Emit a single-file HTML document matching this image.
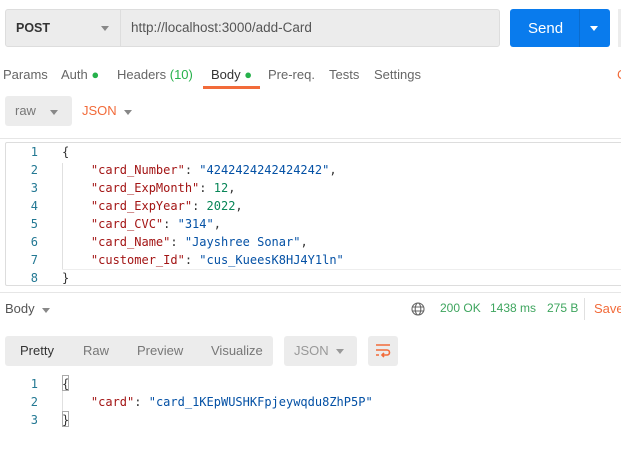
<!DOCTYPE html>
<html><head><meta charset="utf-8"><style>
*{margin:0;padding:0;box-sizing:border-box}
body{width:621px;height:459px;background:#fff;font-family:"Liberation Sans",sans-serif;font-size:13px;color:#505050;position:relative;overflow:hidden}
.a{position:absolute;white-space:nowrap}
.mono{font-family:"DejaVu Sans Mono","Liberation Mono",monospace;font-size:12px}
.tri{display:inline-block;width:0;height:0;border-left:4px solid transparent;border-right:4px solid transparent;border-top:5px solid #888}
.k{color:#a31515}.s{color:#0451a5}.n{color:#098658}.ln{color:#237893;text-align:right;width:20px}
</style></head><body>
<div class="a" style="left:5px;top:9px;width:495px;height:38px;background:#ececec;border:1px solid #ddd;border-radius:3px"></div>
<div class="a" style="left:120px;top:10px;width:1px;height:36px;background:#ddd"></div>
<div class="a" style="left:16px;top:21px;font-weight:bold;color:#333;font-size:12.5px">POST</div>
<div class="a tri" style="left:101px;top:26px"></div>
<div class="a" style="left:131px;top:20px;color:#555;font-size:13.5px">http://localhost:3000/add-Card</div>
<div class="a" style="left:510px;top:9px;width:100px;height:38px;background:#097bed;border-radius:3px"></div>
<div class="a" style="left:579px;top:9px;width:1px;height:38px;background:#0a6ccf"></div>
<div class="a" style="left:528px;top:20px;color:#fff;font-size:15px">Send</div>
<div class="a tri" style="left:590px;top:26px;border-top-color:#fff"></div>
<div class="a" style="left:618px;top:9px;width:3px;height:38px;background:#ececec"></div>

<div class="a" style="left:3px;top:67px;color:#666">Params</div>
<div class="a" style="left:61px;top:67px;color:#666">Auth <span style="color:#26b14b">●</span></div>
<div class="a" style="left:117px;top:67px;color:#666">Headers <span style="color:#26b14b">(10)</span></div>
<div class="a" style="left:211px;top:67px;color:#333">Body <span style="color:#26b14b">●</span></div>
<div class="a" style="left:203px;top:86px;width:57px;height:3px;background:#f26b3a"></div>
<div class="a" style="left:268px;top:67px;color:#666">Pre-req.</div>
<div class="a" style="left:329px;top:67px;color:#666">Tests</div>
<div class="a" style="left:374px;top:67px;color:#666">Settings</div>
<div class="a" style="left:617px;top:67px;color:#f26b3a">C</div>

<div class="a" style="left:5px;top:96px;width:67px;height:30px;background:#ececec;border-radius:3px"></div>
<div class="a" style="left:15px;top:103px;color:#777">raw</div>
<div class="a tri" style="left:50px;top:110px"></div>
<div class="a" style="left:82px;top:103px;color:#f26b3a">JSON</div>
<div class="a tri" style="left:124px;top:110px"></div>
<div class="a" style="left:0;top:138px;width:621px;height:1px;background:#e6e6e6"></div>

<div class="a" style="left:5px;top:142px;width:620px;height:144px;border:1px solid #ddd;border-radius:2px"></div>
<div class="a" style="left:62px;top:163px;width:1px;height:107px;background:#e0e0e0"></div>
<div class="a" style="left:62px;top:269px;width:560px;height:1px;background:#eee"></div>
<div class="a mono" style="left:18px;top:143px;line-height:18px">
<div class="ln">1</div><div class="ln">2</div><div class="ln">3</div><div class="ln">4</div><div class="ln">5</div><div class="ln">6</div><div class="ln">7</div><div class="ln">8</div></div>
<div class="a mono" style="left:62px;top:143px;line-height:18px;color:#333;white-space:pre">{
    <span class="k">"card_Number"</span>: <span class="s">"4242424242424242"</span>,
    <span class="k">"card_ExpMonth"</span>: <span class="n">12</span>,
    <span class="k">"card_ExpYear"</span>: <span class="n">2022</span>,
    <span class="k">"card_CVC"</span>: <span class="s">"314"</span>,
    <span class="k">"card_Name"</span>: <span class="s">"Jayshree Sonar"</span>,
    <span class="k">"customer_Id"</span>: <span class="s">"cus_KueesK8HJ4Y1ln"</span>
}</div>
<div class="a" style="left:0;top:292px;width:621px;height:1px;background:#e6e6e6"></div>

<div class="a" style="left:5px;top:301px;color:#555">Body</div>
<div class="a tri" style="left:42px;top:308px"></div>
<svg class="a" style="left:411px;top:302px" width="14" height="14" viewBox="0 0 14 14" fill="none" stroke="#666" stroke-width="1.1"><circle cx="7" cy="7" r="6"/><ellipse cx="7" cy="7" rx="2.8" ry="6"/><path d="M1 5h12M1 9h12"/></svg>
<div class="a" style="left:440px;top:301px;color:#3ea55e;font-size:12px">200 OK</div>
<div class="a" style="left:490px;top:301px;color:#3ea55e;font-size:12px">1438 ms</div>
<div class="a" style="left:547px;top:301px;color:#3ea55e;font-size:12px">275 B</div>
<div class="a" style="left:584px;top:298px;width:1px;height:22px;background:#e0e0e0"></div>
<div class="a" style="left:594px;top:301px;color:#f26b3a">Save</div>

<div class="a" style="left:5px;top:336px;width:268px;height:30px;background:#ececec;border-radius:3px"></div>
<div class="a" style="left:20px;top:343px;color:#333">Pretty</div>
<div class="a" style="left:83px;top:343px;color:#777">Raw</div>
<div class="a" style="left:137px;top:343px;color:#777">Preview</div>
<div class="a" style="left:211px;top:343px;color:#777">Visualize</div>
<div class="a" style="left:284px;top:336px;width:73px;height:30px;background:#ececec;border-radius:3px"></div>
<div class="a" style="left:294px;top:343px;color:#999">JSON</div>
<div class="a tri" style="left:336px;top:349px;border-top-color:#999"></div>
<div class="a" style="left:368px;top:336px;width:30px;height:30px;background:#ececec;border-radius:3px"></div>
<svg class="a" style="left:374px;top:343px" width="18" height="16" viewBox="0 0 18 16" fill="none" stroke="#f26b3a" stroke-width="1.6"><path d="M2 2h14M2 7h11a2.5 2.5 0 0 1 0 5H8M10 10l-2 2 2 2M2 12h3"/></svg>

<div class="a" style="left:62px;top:375px;width:7px;height:16px;border:1px solid #aaa"></div>
<div class="a" style="left:62px;top:411px;width:7px;height:16px;border:1px solid #aaa"></div>
<div class="a" style="left:62px;top:391px;width:1px;height:20px;background:#e0e0e0"></div>
<div class="a mono" style="left:18px;top:375px;line-height:18px">
<div class="ln">1</div><div class="ln">2</div><div class="ln">3</div></div>
<div class="a mono" style="left:62px;top:375px;line-height:18px;color:#333;white-space:pre">{
    <span class="k">"card"</span>: <span class="s">"card_1KEpWUSHKFpjeywqdu8ZhP5P"</span>
}</div>
</body></html>
